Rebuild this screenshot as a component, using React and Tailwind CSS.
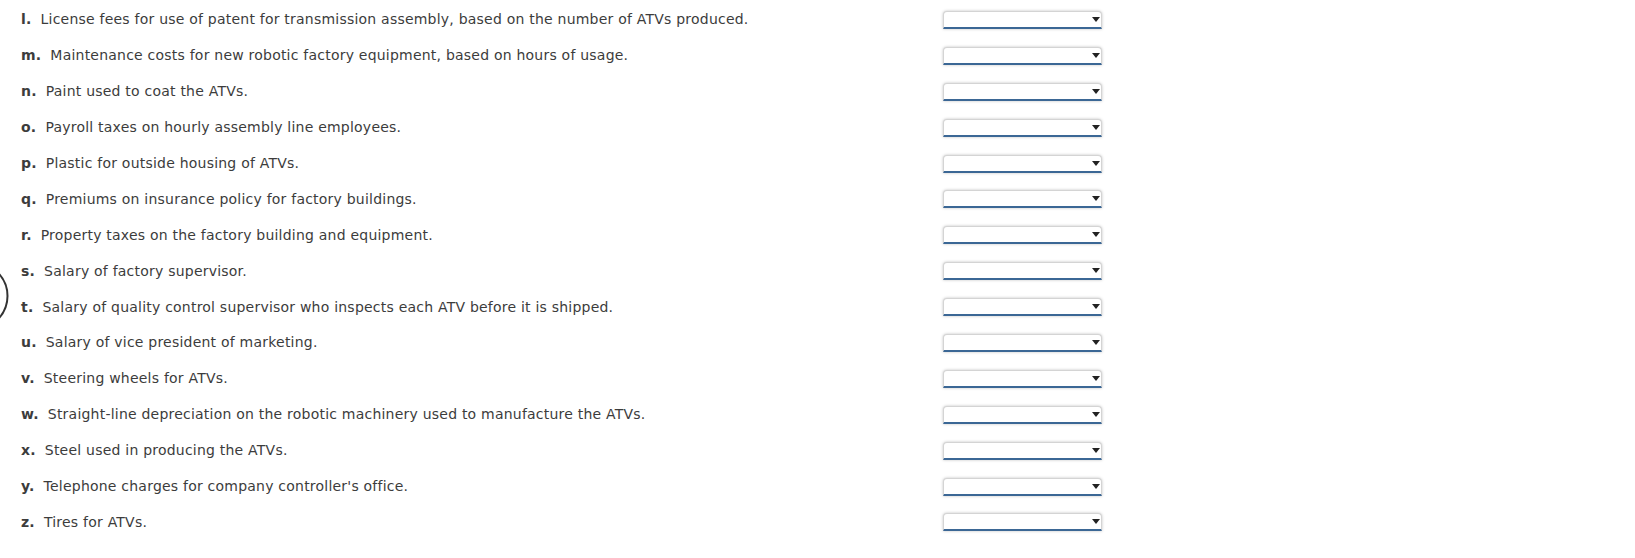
import React from "react";

const rows = [
  ["l.", "License fees for use of patent for transmission assembly, based on the number of ATVs produced."],
  ["m.", "Maintenance costs for new robotic factory equipment, based on hours of usage."],
  ["n.", "Paint used to coat the ATVs."],
  ["o.", "Payroll taxes on hourly assembly line employees."],
  ["p.", "Plastic for outside housing of ATVs."],
  ["q.", "Premiums on insurance policy for factory buildings."],
  ["r.", "Property taxes on the factory building and equipment."],
  ["s.", "Salary of factory supervisor."],
  ["t.", "Salary of quality control supervisor who inspects each ATV before it is shipped."],
  ["u.", "Salary of vice president of marketing."],
  ["v.", "Steering wheels for ATVs."],
  ["w.", "Straight-line depreciation on the robotic machinery used to manufacture the ATVs."],
  ["x.", "Steel used in producing the ATVs."],
  ["y.", "Telephone charges for company controller's office."],
  ["z.", "Tires for ATVs."],
];

function Dropdown() {
  return (
    <div className="relative w-[159px] h-[18px] bg-white rounded-t-[4px] border border-[#d4d4d4] border-b-2 border-b-[#3b6795] shadow-[0_0_3px_rgba(0,0,0,0.25)]">
      <svg className="absolute right-[1px] top-[5px]" width="8" height="5" viewBox="0 0 8 5">
        <path d="M0 0 L8 0 L4 5 Z" fill="#222" />
      </svg>
    </div>
  );
}

export default function App() {
  return (
    <div className="relative w-[1635px] h-[558px] bg-white overflow-hidden" style={{ fontFamily: "Verdana, 'DejaVu Sans', sans-serif" }}>
      <svg className="absolute left-0 top-[270px]" width="12" height="52" viewBox="0 0 12 52">
        <circle cx="-25.5" cy="26" r="33" fill="none" stroke="#333" strokeWidth="2" />
      </svg>
      <div className="flex flex-col pt-[2px]">
        {rows.map(([k, t]) => (
          <div key={k} className="flex items-center h-[35.9px]">
            <div className="w-[943px] pl-[21px] text-[14px] tracking-[0.22px] text-[#3c3c3c]">
              <span className="font-bold mr-[9px]">{k}</span>
              {t}
            </div>
            <Dropdown />
          </div>
        ))}
      </div>
    </div>
  );
}
